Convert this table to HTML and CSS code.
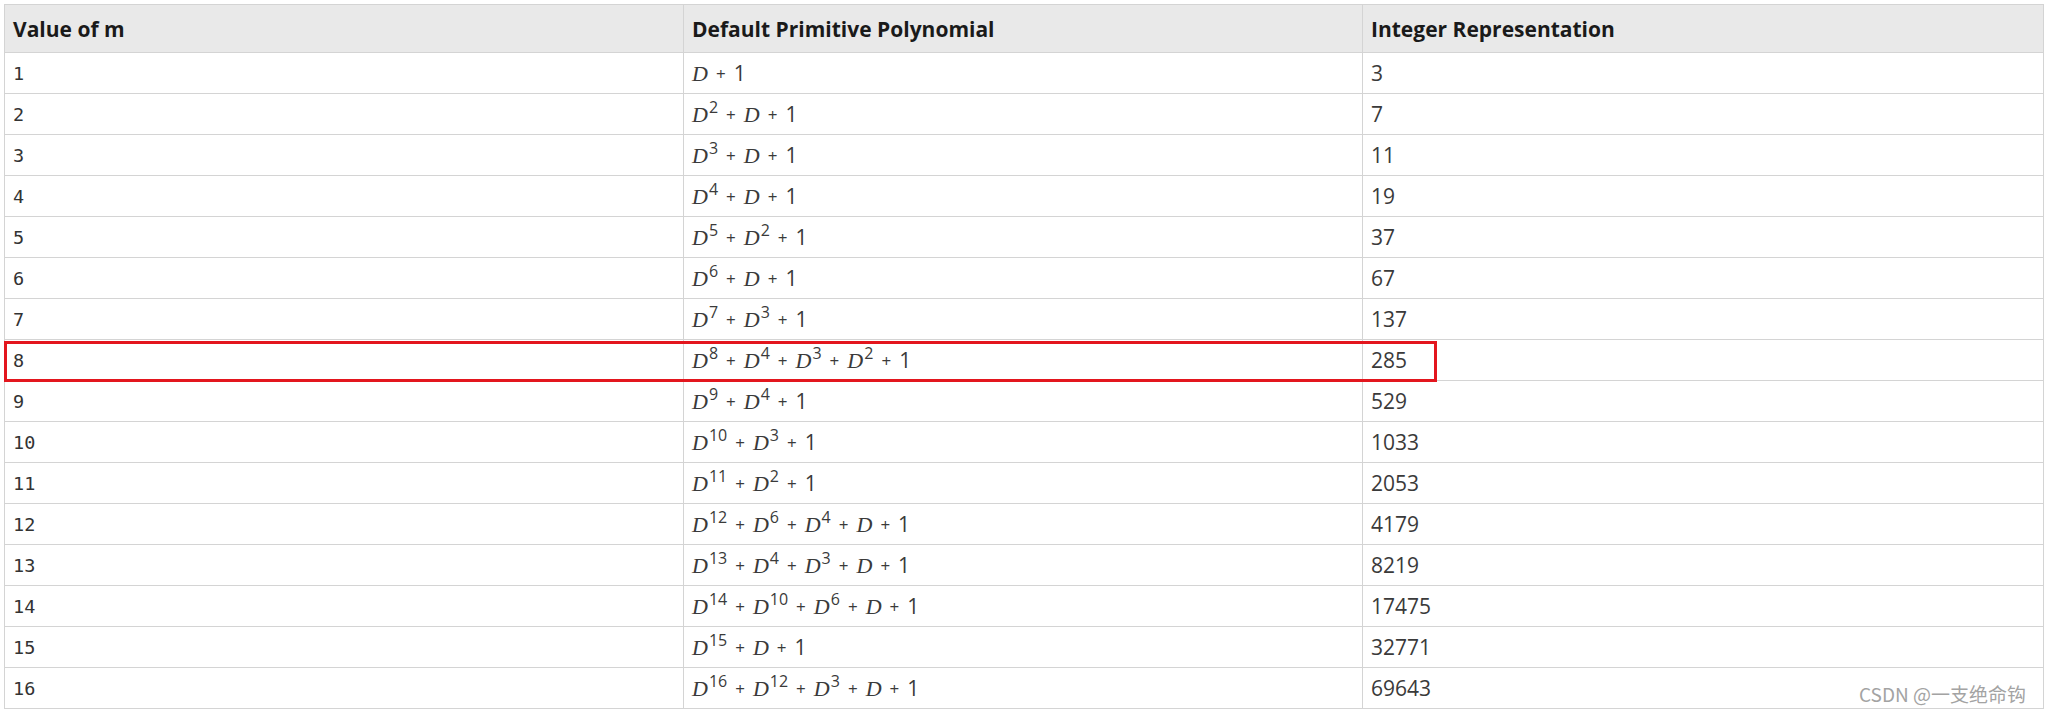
FILE: index.html
```html
<!DOCTYPE html>
<html lang="en">
<head>
<meta charset="utf-8">
<title>Default Primitive Polynomials</title>
<link rel="stylesheet" href="styles.css">
</head>
<body>
<div class="wrap">
<table class="poly">
<colgroup><col class="c1"><col class="c2"><col class="c3"></colgroup>
<thead>
<tr><th>Value of m</th><th>Default Primitive Polynomial</th><th>Integer Representation</th></tr>
</thead>
<tbody>
<tr><td class="m">1</td><td class="p"><var>D</var><span class="op">+</span><span class="n">1</span></td><td class="v">3</td></tr>
<tr><td class="m">2</td><td class="p"><var>D</var><sup>2</sup><span class="op">+</span><var>D</var><span class="op">+</span><span class="n">1</span></td><td class="v">7</td></tr>
<tr><td class="m">3</td><td class="p"><var>D</var><sup>3</sup><span class="op">+</span><var>D</var><span class="op">+</span><span class="n">1</span></td><td class="v">11</td></tr>
<tr><td class="m">4</td><td class="p"><var>D</var><sup>4</sup><span class="op">+</span><var>D</var><span class="op">+</span><span class="n">1</span></td><td class="v">19</td></tr>
<tr><td class="m">5</td><td class="p"><var>D</var><sup>5</sup><span class="op">+</span><var>D</var><sup>2</sup><span class="op">+</span><span class="n">1</span></td><td class="v">37</td></tr>
<tr><td class="m">6</td><td class="p"><var>D</var><sup>6</sup><span class="op">+</span><var>D</var><span class="op">+</span><span class="n">1</span></td><td class="v">67</td></tr>
<tr><td class="m">7</td><td class="p"><var>D</var><sup>7</sup><span class="op">+</span><var>D</var><sup>3</sup><span class="op">+</span><span class="n">1</span></td><td class="v">137</td></tr>
<tr><td class="m">8</td><td class="p"><var>D</var><sup>8</sup><span class="op">+</span><var>D</var><sup>4</sup><span class="op">+</span><var>D</var><sup>3</sup><span class="op">+</span><var>D</var><sup>2</sup><span class="op">+</span><span class="n">1</span></td><td class="v">285</td></tr>
<tr><td class="m">9</td><td class="p"><var>D</var><sup>9</sup><span class="op">+</span><var>D</var><sup>4</sup><span class="op">+</span><span class="n">1</span></td><td class="v">529</td></tr>
<tr><td class="m">10</td><td class="p"><var>D</var><sup>10</sup><span class="op">+</span><var>D</var><sup>3</sup><span class="op">+</span><span class="n">1</span></td><td class="v">1033</td></tr>
<tr><td class="m">11</td><td class="p"><var>D</var><sup>11</sup><span class="op">+</span><var>D</var><sup>2</sup><span class="op">+</span><span class="n">1</span></td><td class="v">2053</td></tr>
<tr><td class="m">12</td><td class="p"><var>D</var><sup>12</sup><span class="op">+</span><var>D</var><sup>6</sup><span class="op">+</span><var>D</var><sup>4</sup><span class="op">+</span><var>D</var><span class="op">+</span><span class="n">1</span></td><td class="v">4179</td></tr>
<tr><td class="m">13</td><td class="p"><var>D</var><sup>13</sup><span class="op">+</span><var>D</var><sup>4</sup><span class="op">+</span><var>D</var><sup>3</sup><span class="op">+</span><var>D</var><span class="op">+</span><span class="n">1</span></td><td class="v">8219</td></tr>
<tr><td class="m">14</td><td class="p"><var>D</var><sup>14</sup><span class="op">+</span><var>D</var><sup>10</sup><span class="op">+</span><var>D</var><sup>6</sup><span class="op">+</span><var>D</var><span class="op">+</span><span class="n">1</span></td><td class="v">17475</td></tr>
<tr><td class="m">15</td><td class="p"><var>D</var><sup>15</sup><span class="op">+</span><var>D</var><span class="op">+</span><span class="n">1</span></td><td class="v">32771</td></tr>
<tr><td class="m">16</td><td class="p"><var>D</var><sup>16</sup><span class="op">+</span><var>D</var><sup>12</sup><span class="op">+</span><var>D</var><sup>3</sup><span class="op">+</span><var>D</var><span class="op">+</span><span class="n">1</span></td><td class="v">69643</td></tr>
</tbody>
</table>
<div class="highlight"></div>
<div class="watermark">CSDN @一支绝命钩</div>
</div>
</body>
</html>
```
FILE: styles.css
```css
html, body {
  margin: 0;
  padding: 0;
  background: #ffffff;
}

.wrap {
  position: relative;
  padding: 4px 0 0 4px;
}

.poly {
  border-collapse: collapse;
  table-layout: fixed;
  width: 2039px;
  color: #333333;
}

.c1 { width: 679px; }
.c2 { width: 679px; }
.c3 { width: 681px; }

.poly th,
.poly td {
  border: 1px solid #d4d4d4;
  padding: 0 8px;
  text-align: left;
  vertical-align: middle;
  white-space: nowrap;
}

.poly thead tr { height: 48px; }
.poly tbody tr { height: 41px; }

.poly th {
  background: #e9e9e9;
  color: #1a1a1a;
  font-family: "Open Sans", "Noto Sans", sans-serif;
  font-weight: 700;
  font-size: 21px;
}

.m {
  font-family: "DejaVu Sans Mono", "Liberation Mono", monospace;
  font-size: 18.5px;
  padding-top: 2px;
}

.v {
  font-family: "Open Sans", "Noto Sans", sans-serif;
  font-size: 21px;
  color: #3a3a3a;
}

.p {
  font-family: "Open Sans", "Noto Sans", sans-serif;
  font-size: 21px;
  color: #3a3a3a;
}

.p var {
  font-family: "Liberation Serif", "DejaVu Serif", serif;
  font-style: italic;
  font-size: 22px;
}

.p sup {
  font-size: 16px;
  vertical-align: 9px;
  line-height: 0;
  margin-left: 1px;
}

.p .op {
  display: inline-block;
  font-size: 17px;
  margin: 0 8px;
  vertical-align: 1px;
}

.highlight {
  position: absolute;
  left: 4px;
  top: 341px;
  width: 1433px;
  height: 41px;
  box-sizing: border-box;
  border: 3px solid #e3161e;
}

.watermark {
  position: absolute;
  left: 1859px;
  top: 680px;
  font-family: "Noto Sans CJK SC", sans-serif;
  font-size: 19px;
  color: #a3a3a3;
  white-space: nowrap;
}
```
